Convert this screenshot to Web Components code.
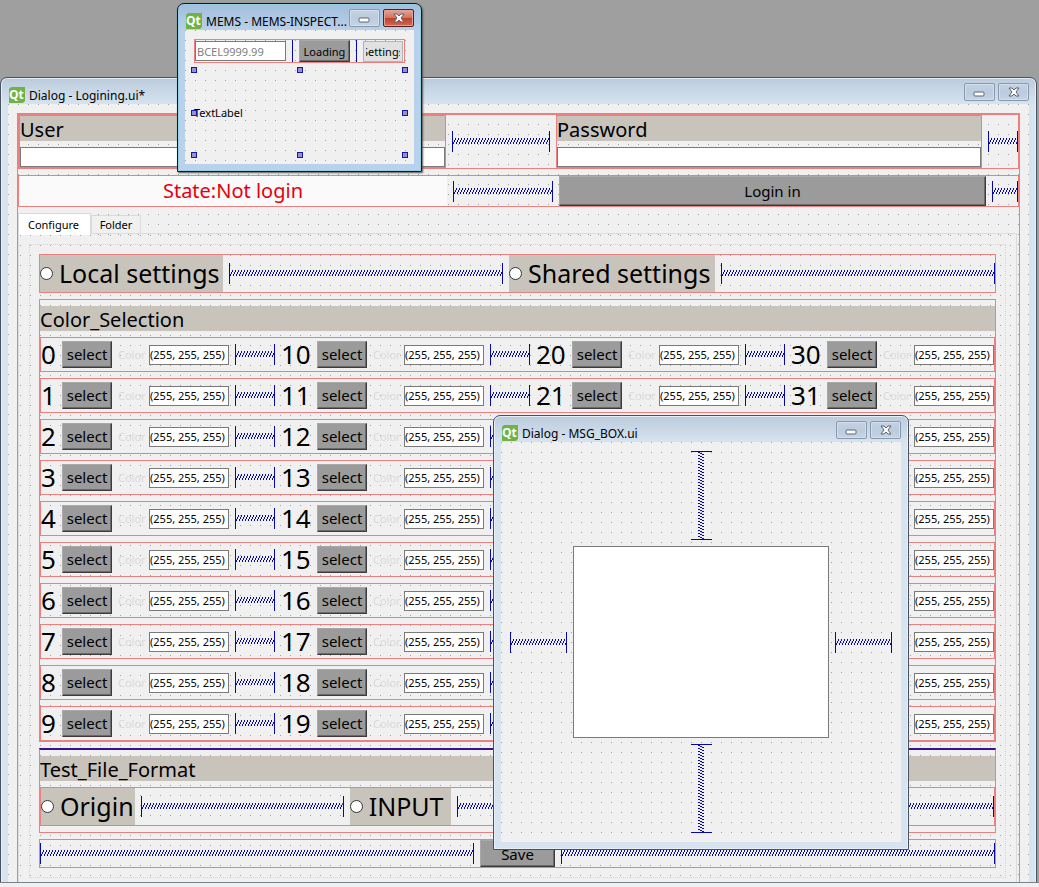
<!DOCTYPE html>
<html lang="en">
<head>
<meta charset="utf-8">
<title>Qt Designer</title>
<style>
  html, body { height: 100%; margin: 0; }
  body { font-family: "Noto Sans", sans-serif; color: #000; background: #f0f0f0; overflow: hidden; }
</style>
</head>
<body>
<designer-desktop></designer-desktop>

<script>
const BASE = `
  *, *::before, *::after { box-sizing: border-box; }
  :host { box-sizing: border-box; --red: #ec8080; --label: #c8c4bc; --blue: #0808a8; }
  :host([hidden]) { display: none; }
  button, input { font-family: inherit; color: inherit; margin: 0; border-radius: 0; }
  .dots { background: conic-gradient(at 1px 1px, transparent 75%, #a0a0a0 0) 0 0 / 10px 10px, #f0f0f0; }
  .push { background: #9b9b9b; border: 1px solid; border-color: #a8a8a8 #3c3c3c #3c3c3c #a8a8a8; padding: 0; box-shadow: inset -1px -1px #6a6a6a; text-align: center; }
  .field { background: #fff; border: 1px solid #7a7a7a; padding: 0 1px; min-width: 0; }
`;

class UiElement extends HTMLElement {
  connectedCallback() {
    if (this.shadowRoot) return;
    const t = document.createElement('template');
    t.innerHTML = `<style>${BASE}${this.styles()}</style>${this.markup()}`;
    this.attachShadow({ mode: 'open' }).append(t.content.cloneNode(true));
  }
  styles() { return ''; }
  markup() { return '<slot></slot>'; }
}

/* Spring shown for a layout spacer; "vertical" turns it upright. */
customElements.define('ui-spacer', class extends UiElement {
  styles() {
    return `
      :host { display: block; height: 21px; min-width: 0; min-height: 0; overflow: hidden; align-self: center; border: solid var(--blue); border-width: 0 1px; }
      :host([vertical]) { width: 21px; height: auto; align-self: stretch; justify-self: center; border-width: 1px 0; }
      svg { display: block; width: 100%; height: 100%; }
      path { stroke: var(--blue); fill: none; shape-rendering: crispEdges; }`;
  }
  markup() {
    return this.hasAttribute('vertical')
      ? `<svg aria-hidden="true"><defs><pattern id="z" width="21" height="3" patternUnits="userSpaceOnUse"><path d="M7 0 L13 3 M7 -3 L13 0 M7 3 L13 6"/></pattern></defs><rect width="21" height="100%" fill="url(#z)"/></svg>`
      : `<svg aria-hidden="true"><defs><pattern id="z" width="3" height="21" patternUnits="userSpaceOnUse"><path d="M0 13 L3 7 M-3 13 L0 7 M3 13 L6 7"/></pattern></defs><rect width="100%" height="21" fill="url(#z)"/></svg>`;
  }
});

/* Aero style window frame. */
customElements.define('ui-window', class extends UiElement {
  styles() {
    return `
      :host { display: flex; flex-direction: column; border: 1px solid #48525e; border-radius: 7px 7px 0 0;
              padding: 0 7px 7px; background: linear-gradient(#bccbdc, #d7e4f0 27px); box-shadow: inset 0 0 0 1px #e6eef7; }
      :host([active]) { border-color: #101820; background: linear-gradient(#a3bddb, #b9d1ea 27px);
              box-shadow: inset 0 0 0 1px #8fd0e4, 1px 1px 2px #555; }
      header { display: flex; height: 26px; flex: none; }
      .logo { flex: none; width: 16px; height: 16px; margin: 9px 4px 0 1px; }
      .logo text { font: bold 12px "Open Sans", sans-serif; fill: #fff; }
      h1 { flex: 1; min-width: 0; margin: 9px 0 0; font-size: 12px; line-height: 17px; font-weight: 400; white-space: nowrap; }
      .tools { display: flex; gap: 3px; margin-top: 5px; }
      .tools button { width: 31px; height: 18px; padding: 0; border: 1px solid #8798b0; border-radius: 2px; background: linear-gradient(#c4d2e2, #bccbdd 50%, #c6d4e4); box-shadow: inset 0 0 0 1px #d3dfeb; }
      .tools svg { display: block; margin: auto; }
      :host([active]) .close { background: linear-gradient(#e3a79b, #d4705c 50%, #c0402a 50%, #cf6a50); border-color: #5c1c1c; box-shadow: inset 0 0 0 1px #e0a494; }
      .body { flex: 1; min-height: 0; display: grid; }`;
  }
  markup() {
    return `
      <header>
        <svg class="logo" viewBox="0 0 16 16" aria-hidden="true"><path d="M2 0H16V14L14 16H0V2Z" fill="#6fb344"/><text x="0" y="12">Qt</text></svg>
        <h1>${this.getAttribute('caption')}</h1>
        <div class="tools">
          <button type="button" aria-label="Minimize"><svg width="29" height="16"><rect x="9" y="8" width="10" height="4" rx="1" fill="#fff" stroke="#5b6675"/></svg></button>
          <button type="button" class="close" aria-label="Close"><svg width="29" height="16"><path d="M10 4h3l2 2 2-2h3l-3 4 3 4h-3l-2-2-2 2h-3l3-4z" fill="#fff" stroke="#5b6070"/></svg></button>
        </div>
      </header>
      <div class="body dots"><slot></slot></div>`;
  }
});

customElements.define('ui-heading', class extends UiElement {
  styles() { return `:host { display: block; height: 25px; line-height: 27px; font-size: 20px; background: var(--label); white-space: nowrap; }`; }
});

/* Caption above a text box. */
customElements.define('ui-credential', class extends UiElement {
  styles() {
    return `
      :host { display: flex; flex-direction: column; gap: 6px; min-width: 0; border: 1px solid var(--red); }
      label { height: 25px; line-height: 27px; font-size: 20px; background: var(--label); }
      input { width: 100%; height: 20px; font-size: 12px; }`;
  }
  markup() {
    return `<label for="f"><slot></slot></label><input id="f" class="field" type="${this.getAttribute('type') || 'text'}">`;
  }
});

customElements.define('ui-radio', class extends UiElement {
  styles() {
    return `
      :host { display: block; flex: none; background: var(--label); }
      label { display: flex; align-items: center; gap: 6px; height: 100%; font-size: 25px; line-height: 37px; white-space: nowrap; }
      input { appearance: none; flex: none; width: 13px; height: 13px; border: 1px solid #333; border-radius: 50%; background: #fff; }`;
  }
  markup() { return `<label><input type="radio"><span><slot></slot></span></label>`; }
});

/* One line of colour slots: n, n+10, n+20, n+30. */
customElements.define('ui-color-row', class extends UiElement {
  styles() {
    return `
      :host { display: flex; align-items: center; gap: 6px; height: 35px; border: 1px solid var(--red); }
      .num { width: 30px; font-size: 26px; line-height: 33px; white-space: nowrap; }
      .num.short { width: 15px; }
      .push { width: 50px; height: 27px; font-size: 15px; line-height: 25px; }
      .name { width: 25px; font-size: 11px; color: #dadada; }
      .field { width: 80px; height: 20px; font-size: 11px; padding: 0; }
      .num, .push, .name, .field { flex: none; }
      ui-spacer { flex: 1; }`;
  }
  markup() {
    const n = Number(this.getAttribute('start'));
    return [0, 10, 20, 30].map(k => `
      <span class="num ${n + k < 10 ? 'short' : ''}">${n + k}</span>
      <button type="button" class="push">select</button>
      <label class="name" for="c${k}">Color</label>
      <input class="field" id="c${k}" value="(255, 255, 255)">`).join('<ui-spacer></ui-spacer>');
  }
});

customElements.define('login-form', class extends UiElement {
  styles() {
    return `
      :host { display: block; padding: 9px 9px 0; min-width: 0; }
      .outer { border: 1px solid var(--red); min-height: 100%; }
      .line { display: grid; gap: 6px; border: 1px solid var(--red); margin-bottom: 6px; }
      .creds { grid-template-columns: 427fr 98fr 426fr 30fr; }
      .state { grid-template-columns: 428fr 100fr 427fr 26fr; }
      .line > * { min-width: 0; }
      .msg { background: #fafafa; color: #e8000d; font-size: 20px; line-height: 30px; height: 30px; text-align: center; }
      .login { font-size: 15px; line-height: 28px; height: 30px; }
      .tabs { display: flex; align-items: flex-end; height: 20px; }
      .tabs button { font-size: 11px; line-height: 18px; padding: 0; height: 18px; width: 50px; border: 1px solid #dadada; border-bottom: 0; background: #f0f0f0; }
      .tabs .on { width: 73px; height: 22px; margin-bottom: -2px; background: #fff; z-index: 1; padding-right: 2px; }
      .pane { margin-right: 2px; border: 1px solid #dcdcdc; padding: 1px; }
      .page { padding: 9px; }
      .inner { border: 1px dotted #d4d4d4; padding: 9px; display: flex; flex-direction: column; gap: 6px; }
      .row { display: flex; gap: 6px; border: 1px solid var(--red); }
      .row ui-spacer { flex: 1; }
      .box { border: 1px solid var(--red); padding-top: 6px; display: flex; flex-direction: column; gap: 6px; }
      .mode ui-radio:first-child { width: 183px; }
      .mode ui-radio:nth-of-type(2) { width: 206px; }
      .format { border-top: 2px solid #3a1090; padding-bottom: 6px; }
      .format ui-radio { width: 94px; }
      .format ui-radio:nth-of-type(2) { width: 101px; }
      .format .row ui-spacer { flex: 3 0 0; }
      .format .row ui-spacer:last-child { flex: 8 0 0; }
      .save { width: 75px; height: 27px; font-size: 15px; line-height: 26px; }`;
  }
  markup() {
    const rows = Array.from({ length: 10 }, (_, i) => `<ui-color-row start="${i}"></ui-color-row>`).join('');
    return `
      <div class="outer">
        <div class="line creds">
          <ui-credential>User</ui-credential><ui-spacer></ui-spacer>
          <ui-credential type="password">Password</ui-credential><ui-spacer></ui-spacer>
        </div>
        <div class="line state">
          <div class="msg">State:Not login</div><ui-spacer></ui-spacer>
          <button type="button" class="push login">Login in</button><ui-spacer></ui-spacer>
        </div>
        <div class="tabs" role="tablist">
          <button type="button" role="tab" aria-selected="true" class="on">Configure</button>
          <button type="button" role="tab">Folder</button>
        </div>
        <div class="pane"><div class="page dots"><div class="inner">
          <div class="row mode">
            <ui-radio>Local settings</ui-radio><ui-spacer></ui-spacer>
            <ui-radio>Shared settings</ui-radio><ui-spacer></ui-spacer>
          </div>
          <div class="box"><ui-heading>Color_Selection</ui-heading>${rows}</div>
          <div class="box format">
            <ui-heading>Test_File_Format</ui-heading>
            <div class="row">
              <ui-radio>Origin</ui-radio><ui-spacer></ui-spacer>
              <ui-radio>INPUT</ui-radio><ui-spacer></ui-spacer>
            </div>
          </div>
          <div class="row">
            <ui-spacer></ui-spacer><button type="button" class="push save">Save</button><ui-spacer></ui-spacer>
          </div>
        </div></div></div>
      </div>`;
  }
});

customElements.define('msg-form', class extends UiElement {
  styles() {
    return `
      :host { display: grid; padding: 9px; gap: 6px; min-height: 0;
              grid-template: minmax(0, 1fr) 192px minmax(0, 1fr) / minmax(0, 1fr) 256px minmax(0, 1fr); }
      .top, textarea, .bottom { grid-column: 2; }
      .left, textarea, .right { grid-row: 2; }
      .left { grid-column: 1; }
      .right { grid-column: 3; }
      .top { grid-row: 1; }
      .bottom { grid-row: 3; }
      textarea { resize: none; margin: 0; width: 100%; height: 100%; border: 1px solid #7a7a7a; background: #fff; }`;
  }
  markup() {
    return `
      <ui-spacer vertical class="top"></ui-spacer>
      <ui-spacer class="left"></ui-spacer>
      <textarea aria-label="Message"></textarea>
      <ui-spacer class="right"></ui-spacer>
      <ui-spacer vertical class="bottom"></ui-spacer>`;
  }
});

customElements.define('mems-form', class extends UiElement {
  styles() {
    return `
      :host { display: flex; flex-direction: column; gap: 7px; padding: 9px; font-size: 11px; min-width: 0; }
      .bar { display: flex; align-items: center; gap: 6px; height: 24px; border: 1px solid var(--red); }
      .field { flex: 1; height: 20px; font-size: 11px; color: #808080; }
      .bar i { width: 1px; height: 22px; background: var(--blue); }
      .push { width: 51px; height: 22px; font-size: 11px; }
      .set { width: 40px; height: 21px; padding: 0 2px; border: 1px solid #b4b4b4; background: #e1e1e1; font-size: 11px; margin-right: 1px; }
      .set span { display: flex; justify-content: center; overflow: hidden; }
      .sel { position: relative; flex: 1; display: flex; align-items: center; }
      .sel b { position: absolute; width: 6px; height: 6px; border: 1px solid #1818a8; background: #9494cc; transform: translate(-50%, -50%); }`;
  }
  markup() {
    const spots = [[0,0],[50,0],[100,0],[0,50],[100,50],[0,100],[50,100],[100,100]];
    return `
      <div class="bar">
        <input class="field" aria-label="Limit" value="BCEL9999.99"><i></i>
        <button type="button" class="push">Loading</button><i></i>
        <button type="button" class="set"><span>Settings</span></button>
      </div>
      <div class="sel"><span>TextLabel</span>${spots.map(([x, y]) => `<b style="left:${x}%;top:${y}%"></b>`).join('')}</div>`;
  }
});

customElements.define('designer-desktop', class extends UiElement {
  styles() {
    return `
      :host { display: flex; flex-direction: column; height: 100%; }
      main { position: relative; flex: 1; overflow: hidden; background: #9f9f9f; border-bottom: 1px solid #7c828a; }
      footer { height: 4px; background: #f0f0f0; }
      ui-window { position: absolute; }
      .login { left: 0; right: 2px; top: 77px; min-height: 830px; }
      .msg { left: 493px; top: 415px; width: 416px; height: 435px; }
      .mems { left: 177px; top: 3px; width: 245px; height: 169px; }`;
  }
  markup() {
    return `
      <main>
        <ui-window class="login" caption="Dialog - Logining.ui*"><login-form></login-form></ui-window>
        <ui-window class="msg" caption="Dialog - MSG_BOX.ui"><msg-form></msg-form></ui-window>
        <ui-window class="mems" active caption="MEMS - MEMS-INSPECT..."><mems-form></mems-form></ui-window>
      </main>
      <footer></footer>`;
  }
});
</script>
</body>
</html>
